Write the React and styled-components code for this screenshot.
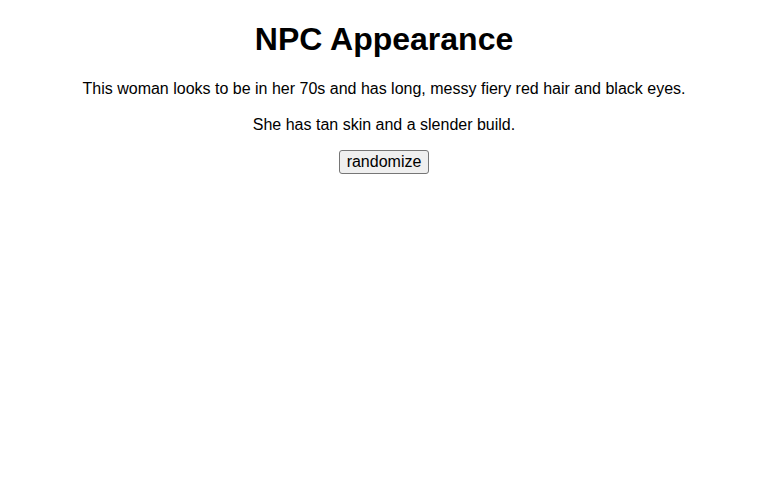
import React from "react";
import styled, { createGlobalStyle } from "styled-components";

const GlobalStyle = createGlobalStyle`
  body {
    margin: 0;
    font-family: "Liberation Sans", Arial, sans-serif;
    color: #000;
    background: #fff;
  }
`;

const Page = styled.div`
  padding: 0 8px;
  text-align: center;
`;

const Title = styled.h1`
  font-size: 32px;
  font-weight: bold;
  margin: 21px 0 22px;
`;

const Line = styled.p`
  font-size: 16px;
  margin: 18px 0 16px;
`;

const Actions = styled.div`
  margin-top: 16px;
  & > button {
    vertical-align: top;
  }
`;

const Button = styled.button`
  font-family: "Liberation Sans", Arial, sans-serif;
  font-size: 16px;
  color: #000;
  background: #efefef;
  border: 1px solid #767676;
  border-radius: 3px;
  padding: 2px 7px;
  cursor: pointer;
`;

export default class App extends React.Component {
  render() {
    return (
      <Page>
        <GlobalStyle />
        <Title>NPC Appearance</Title>
        <Line>
          This woman looks to be in her 70s and has long, messy fiery red hair
          and black eyes.
        </Line>
        <Line>She has tan skin and a slender build.</Line>
        <Actions>
          <Button>randomize</Button>
        </Actions>
      </Page>
    );
  }
}
